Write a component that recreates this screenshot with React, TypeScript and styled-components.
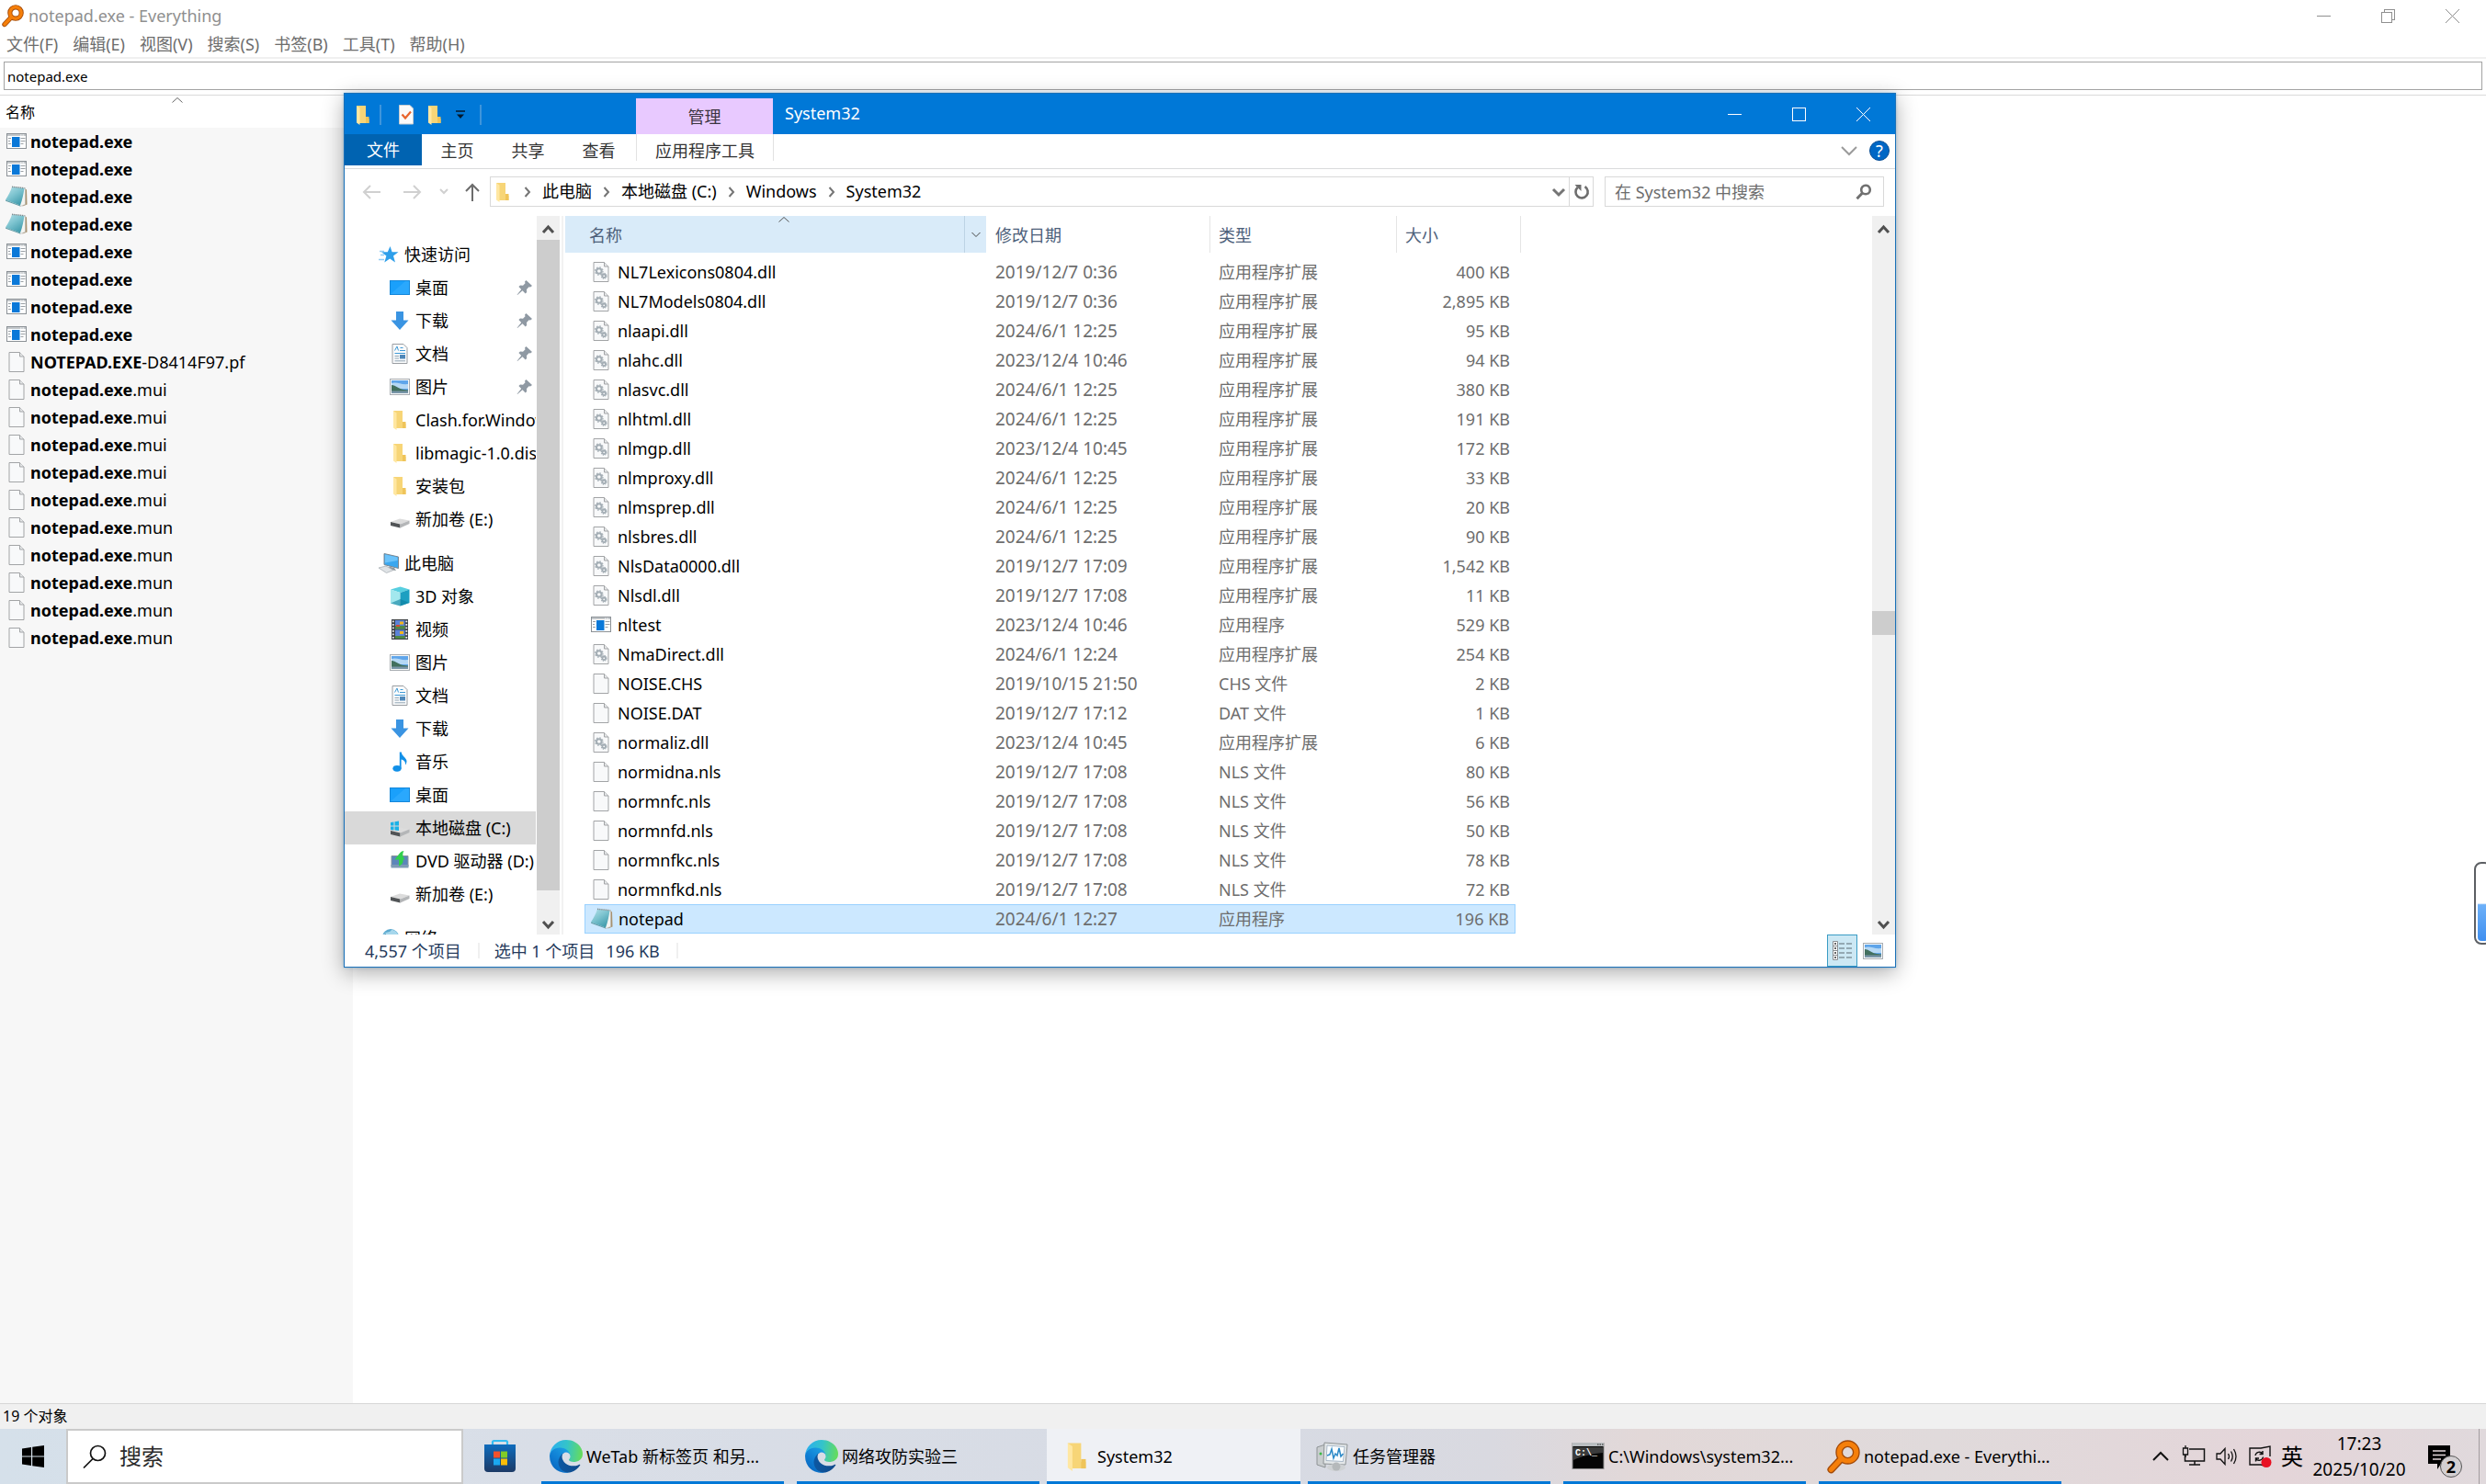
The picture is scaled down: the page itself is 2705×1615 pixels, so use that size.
import React from 'react';
import styled, { createGlobalStyle, css } from 'styled-components';

const UI_FONT = '"Noto Sans", "Noto Sans CJK SC", sans-serif';

const GlobalStyle = createGlobalStyle`
  *, *::before, *::after { box-sizing: border-box; }
  html, body { margin: 0; padding: 0; background: #fff; overflow: hidden; }
  body { font-family: ${UI_FONT}; font-size: 18px; line-height: 24px; color: #000; }
  button, input { font: inherit; color: inherit; margin: 0; padding: 0; border: 0; background: none; border-radius: 0; outline: 0; }
  button { cursor: default; }
  svg { display: block; flex: none; overflow: visible; }
  table { border-collapse: separate; border-spacing: 0; }
  ul { list-style: none; margin: 0; padding: 0; }
`;

/* ------------------------------------------------------------------ icons */

const MagnifierLogo = ({ size = 24 }: { size?: number }) => (
  <svg width={size} height={size} viewBox="0 0 24 24">
    <circle cx="15" cy="9" r="6.2" fill="none" stroke="#a34a08" strokeWidth="5.2" />
    <path d="M10.5 13.5 L3 21.5" stroke="#a34a08" strokeWidth="5.4" strokeLinecap="round" />
    <circle cx="15" cy="9" r="6.2" fill="none" stroke="#f57f0a" strokeWidth="3.4" />
    <path d="M10.5 13.5 L3 21.5" stroke="#f57f0a" strokeWidth="3.6" strokeLinecap="round" />
  </svg>
);

const ExeIcon = () => (
  <svg width="22" height="18" viewBox="0 0 22 18">
    <rect x=".5" y=".5" width="21" height="16" fill="#fff" stroke="#8b9196" />
    <path d="M1 2h20" stroke="#c3c7ca" strokeWidth="2" />
    <path d="M15 2h1.500M17.500 2h1.500" stroke="#fff" strokeWidth="1.200" />
    <path d="M2 5.500h3M2 8.500h2M2 11.500h3M15.500 5.500h5M15.500 8.500h5M15.500 11.500h3" stroke="#9aa0a5" />
    <rect x="6" y="4" width="8.500" height="11" fill="#0a78d8" />
  </svg>
);

const NotepadIcon = ({ size = 24 }: { size?: number }) => (
  <svg width={size} height={size} viewBox="0 0 24 24">
    <defs>
      <linearGradient id="padCover" x1="0" y1="0" x2=".7" y2="1">
        <stop offset="0" stopColor="#b7e2ea" />
        <stop offset=".5" stopColor="#7cc3cf" />
        <stop offset="1" stopColor="#3f9aab" />
      </linearGradient>
    </defs>
    <path d="M21 3 L23 4.500 L23.500 20.500 L18.500 22.500 Z" fill="#a89270" />
    <path d="M8 1.500 L21.500 2.500 L21.500 20.500 L16 22.500 Z" fill="#f4f4f1" stroke="#b4b5b3" strokeWidth=".6" />
    <path d="M7 1.500 L20.500 3 C19.500 9 18.500 15 16 21.500 L0 15.500 C3 11 5.500 6 7 1.500 Z" fill="url(#padCover)" />
    <path d="M0 15.500 L16 21.500 L16 22.600 L.2 16.800 Z" fill="#5f9aa5" />
    <path d="M7 1.300 L20.500 2.800" stroke="#7c8b90" strokeWidth="1.400" strokeDasharray="1.200 1" />
  </svg>
);

const PageIcon = ({ gears = false, size = 24 }: { gears?: boolean; size?: number }) => (
  <svg width={size} height={size} viewBox="0 0 24 24">
    <path d="M4 1.500 H15.500 L20 6 V22.500 H4 Z" fill="#f8f9fa" stroke="#a2a4a6" />
    <path d="M15.500 1.500 V6 H20" fill="#e6e8e9" stroke="#a2a4a6" />
    {gears && (
      <g fill="none" stroke="#a3adb4">
        <circle cx="9.800" cy="11" r="2.800" strokeWidth="2" />
        <circle cx="9.800" cy="11" r="4.200" strokeWidth="1.200" strokeDasharray="1.600 1.700" />
        <circle cx="15.200" cy="16.300" r="1.800" strokeWidth="1.800" />
        <circle cx="15.200" cy="16.300" r="2.900" strokeWidth="1.200" strokeDasharray="1.200 1.080" />
      </g>
    )}
  </svg>
);

const FolderIcon = ({ size = 22 }: { size?: number }) => (
  <svg width={size} height={size} viewBox="0 0 22 22">
    <path d="M4 1 H14 V15 H17.500 V20 H7 Z" fill="#f7d577" />
    <path d="M14 13 H17.500 V20 H14 Z" fill="#efc45a" />
    <path d="M4 1 L7.500 3.500 V22 L4 19.500 Z" fill="#ffe7a2" />
  </svg>
);

const StarIcon = () => (
  <svg width="22" height="22" viewBox="0 0 22 22">
    <path d="M12.500 2 L14.600 8.200 L21.500 8.200 L16 12.400 L18 19.500 L12.200 15.400 L6.300 19.500 L8.400 12.400 L3 8.200 L9.800 8.200 Z" fill="#2e9fea" />
    <path d="M1 7.500 h5 M2 11.500 h4 M0 16.500 h6" stroke="#8fccf5" strokeWidth="1.300" />
  </svg>
);

const DesktopIcon = () => (
  <svg width="22" height="22" viewBox="0 0 22 22">
    <rect x=".5" y="3.500" width="21" height="15" fill="#1aa0fb" stroke="#1386da" />
    <path d="M1 18 L17 4 H21 V18 Z" fill="#35adff" opacity=".6" />
  </svg>
);

const DownloadIcon = () => (
  <svg width="22" height="22" viewBox="0 0 22 22">
    <path d="M7 1 H15 V10.500 H20.500 L11 21 L1.500 10.500 H7 Z" fill="#3a94e2" />
  </svg>
);

const DocumentIcon = () => (
  <svg width="22" height="22" viewBox="0 0 22 22">
    <path d="M3 .5 H15 L19 4.500 V21.500 H3 Z" fill="#fafbfc" stroke="#9a9ea2" />
    <path d="M5.500 7.500 L8 3 L9.500 7.500 M11.500 4.500 h3 M11 7.500 h6 M5.500 10.500 h11.500" stroke="#3f9ad6" fill="none" />
    <rect x="11" y="12" width="6" height="4.500" fill="#4f87b8" />
    <path d="M5.500 13.500 h4.500 M5.500 16 h4.500 M5.500 18.800 h11.500" stroke="#8fa3b2" />
  </svg>
);

const PictureIcon = ({ size = 22 }: { size?: number }) => (
  <svg width={size} height={size} viewBox="0 0 22 22">
    <rect x=".5" y="2.500" width="21" height="17" fill="#f7f8f8" stroke="#a8adb2" />
    <rect x="2" y="4" width="18" height="14" fill="#5fa5ea" />
    <path d="M2 7 C8 5 12 9 20 8 V13 H2 Z" fill="#b5d8f5" />
    <path d="M2 9 C7 9.500 9 13 15 14 L20 14.500 V18 H2 Z" fill="#42705f" />
    <path d="M2 15.500 H20 V18 H2 Z" fill="#7895a8" />
  </svg>
);

const DriveIcon = ({ system = false }: { system?: boolean }) => (
  <svg width="22" height="22" viewBox="0 0 22 22">
    <path d="M1 14 L11 10.500 L21.500 12.500 L11.500 16.500 Z" fill="#dcdcdc" />
    <path d="M1 14 L11.500 16.500 V20.500 L1 18 Z" fill="#515456" />
    <path d="M11.500 16.500 L21.500 12.500 V16 L11.500 20.500 Z" fill="#b4b6b8" />
    {system && (
      <path d="M1 5 L4.500 4.500 V8.500 H1 Z M5.500 4.300 L10 3.600 V8.500 H5.500 Z M1 9.500 H4.500 V13.400 L1 13 Z M5.500 9.500 H10 V14 L5.500 13.500 Z" fill="#1bb1e7" />
    )}
  </svg>
);

const ComputerIcon = () => (
  <svg width="24" height="22" viewBox="0 0 24 22">
    <path d="M7 .5 L22.500 4 V16.500 L7 12.500 Z" fill="#3aa7ef" stroke="#7a8791" />
    <path d="M8 1.500 L21.500 4.600 V8 L8 10.500 Z" fill="#6cc3fa" />
    <path d="M12 14.500 L18 16 L20 19 L13 18 Z" fill="#8e979d" />
    <path d="M1 16 L9 14 L17 18.500 L9.500 21.500 Z" fill="#dfe3e6" stroke="#a9b0b5" strokeWidth=".8" />
  </svg>
);

const CubeIcon = () => (
  <svg width="22" height="22" viewBox="0 0 22 22">
    <path d="M1 3.500 L11.500 .5 L21.500 3.500 L11.500 7 Z" fill="#58cfe0" />
    <path d="M1 3.500 L11.500 7 V21.500 L1 18.500 Z" fill="#a3e8ee" />
    <path d="M21.500 3.500 L11.500 7 V21.500 L21.500 18 Z" fill="#1d9fc1" />
    <path d="M1 18.500 L11.500 14 L21.500 18 L11.500 21.500 Z" fill="#0e7f9f" opacity=".6" />
  </svg>
);

const VideoIcon = () => (
  <svg width="22" height="22" viewBox="0 0 22 22">
    <rect x="2" y="0" width="18" height="22" fill="#3c4146" />
    <rect x="6" y="1" width="10.500" height="9.500" fill="#5b83d8" />
    <rect x="6" y="11.500" width="10.500" height="9.500" fill="#5b83d8" />
    <path d="M11 2.500 h4 v3 h-4z M11 13 h4 v3 h-4z" fill="#f1b51d" />
    <path d="M6 7 h10.500 v3.500 H6z M6 18 h10.500 v3 H6z" fill="#4f8a45" />
    <path d="M7 6 h4 v2 h-4z" fill="#d34b32" />
    <path d="M3.800 1.500 V22 M18.300 1.500 V22" stroke="#f0f2f3" strokeWidth="1.800" strokeDasharray="1.800 1.700" />
  </svg>
);

const MusicIcon = () => (
  <svg width="22" height="22" viewBox="0 0 22 22">
    <ellipse cx="8" cy="18.300" rx="4.600" ry="3.400" fill="#1190e8" />
    <path d="M10.800 18.500 V.5 H12.800 C13 5 18.500 6.500 18.500 10.500 C18.500 12 17.800 13.500 17 14.500 C17.500 11 15.500 9 12.600 8.500 V18.500 Z" fill="#1190e8" />
  </svg>
);

const DvdIcon = () => (
  <svg width="22" height="22" viewBox="0 0 22 22">
    <path d="M2 5.500 H20 V17 H2 Z" fill="#5c86ba" stroke="#8a949c" />
    <path d="M1.500 15 H20.500 V18.500 H1.500 Z" fill="#7d9ab5" />
    <path d="M10 16.500 V9.500 H5.500 L10.500 3 C12 1 13.500 .3 15.500 0 C14 2.500 14 5 15 7 L16.500 9.500 H14.500 C15 13 13 15.500 10 16.500 Z" fill="#31d04c" />
  </svg>
);

const NetworkIcon = () => (
  <svg width="24" height="22" viewBox="0 0 24 22">
    <circle cx="14" cy="10" r="9" fill="#5ba9cf" />
    <path d="M6 7 C10 3 12 6 15 2 C20 2 23 7 22.500 10 H12 Z" fill="#a6d7ec" />
    <path d="M1 9 L9 6 V14 H1 Z" fill="#3d87b3" />
  </svg>
);

const PinIcon = () => (
  <svg width="18" height="18" viewBox="0 0 18 18">
    <path d="M10.500 1 L17 7 L15 8.500 L13.500 8.200 L11 11 L11.200 14 L9.700 15.500 L6.500 12.300 L1 17 L.6 16.700 L5.200 11 L2.400 8 L4 6.500 L7 6.700 L9.500 4.200 L9 2.500 Z" fill="#8f99a3" />
  </svg>
);

const Stroke = ({ d, w, h, color, width = 1, sharp = true }: { d: string; w: number; h: number; color: string; width?: number; sharp?: boolean }) => (
  <svg width={w} height={h} viewBox={`0 0 ${w} ${h}`}>
    <path d={d} fill="none" stroke={color} strokeWidth={width} shapeRendering={sharp ? 'crispEdges' : 'auto'} />
  </svg>
);

const SearchGlyph = () => (
  <svg width="18" height="18" viewBox="0 0 18 18">
    <circle cx="11" cy="6.500" r="4.800" fill="none" stroke="#707070" strokeWidth="2.600" />
    <path d="M7.500 10 L1.500 16.300" stroke="#707070" strokeWidth="3" />
  </svg>
);

const RefreshGlyph = () => (
  <svg width="18" height="18" viewBox="0 0 18 18">
    <path d="M12.500 3.200 A6.600 6.600 0 1 1 4.600 4" fill="none" stroke="#6e6e6e" strokeWidth="2.600" />
    <path d="M1.500 1 H8.500 V8 Z" fill="#6e6e6e" />
  </svg>
);

const StoreIcon = () => (
  <svg width="36" height="36" viewBox="0 0 36 36">
    <defs>
      <linearGradient id="storeBag" x1="0" y1="0" x2="0" y2="1">
        <stop offset="0" stopColor="#0f6cbd" />
        <stop offset="1" stopColor="#1c3a66" />
      </linearGradient>
    </defs>
    <path d="M10 6 V2.500 Q10 1 11.500 1 H24.500 Q26 1 26 2.500 V6" fill="none" stroke="#35bdf2" strokeWidth="2.200" />
    <path d="M1 5 H35 V31 Q35 35 31 35 H5 Q1 35 1 31 Z" fill="url(#storeBag)" />
    <rect x="11" y="12.500" width="7" height="7" fill="#f1512b" />
    <rect x="19" y="12.500" width="7" height="7" fill="#80cc28" />
    <rect x="11" y="20.500" width="7" height="7" fill="#1ba8f0" />
    <rect x="19" y="20.500" width="7" height="7" fill="#fbbd09" />
  </svg>
);

const EdgeIcon = () => (
  <svg width="36" height="36" viewBox="0 0 256 256">
    <defs>
      <linearGradient id="edgeA" x1="58" y1="177" x2="231" y2="177" gradientUnits="userSpaceOnUse">
        <stop offset="0" stopColor="#0c59a4" />
        <stop offset="1" stopColor="#114a8b" />
      </linearGradient>
      <linearGradient id="edgeB" x1="150" y1="90" x2="40" y2="220" gradientUnits="userSpaceOnUse">
        <stop offset="0" stopColor="#1b9de2" />
        <stop offset=".6" stopColor="#0f7fd4" />
        <stop offset="1" stopColor="#0a6cc4" />
      </linearGradient>
      <linearGradient id="edgeC" x1="10" y1="80" x2="250" y2="110" gradientUnits="userSpaceOnUse">
        <stop offset="0" stopColor="#2cb0ec" />
        <stop offset=".5" stopColor="#34c4c9" />
        <stop offset="1" stopColor="#66dc5c" />
      </linearGradient>
    </defs>
    <path d="M231 190.500a93.700 93.700 0 0 1-10.500 4.700 101.900 101.900 0 0 1-35.900 6.400c-47.300 0-88.500-32.500-88.500-74.300A31.500 31.500 0 0 1 112.500 100c-42.800 1.800-53.800 46.400-53.800 72.500 0 74 68.100 81.400 82.800 81.400 7.900 0 19.800-2.300 27-4.600l1.300-.4a128.300 128.300 0 0 0 66.600-52.800 4 4 0 0 0-5.400-5.600Z" fill="url(#edgeA)" />
    <path d="M105.700 241.400A79.200 79.200 0 0 1 83 220.100a80.700 80.700 0 0 1 29.500-120c3.100-1.500 8.500-4.200 15.600-4a32.400 32.400 0 0 1 25.700 13 31.900 31.900 0 0 1 6.300 18.700c0-.2 24.500-79.600-80-79.600-43.900 0-80 41.700-80 78.200a130.200 130.200 0 0 0 12.100 56 128 128 0 0 0 156.400 67 75.500 75.500 0 0 1-62.800-8Z" fill="url(#edgeB)" />
    <path d="M152.300 148.900c-.8 1-3.300 2.500-3.300 5.700 0 2.600 1.700 5.100 4.700 7.200 14.400 10 41.500 8.700 41.600 8.700a59.600 59.600 0 0 0 30.300-8.300 61.400 61.400 0 0 0 30.400-52.900c.3-22.400-8-37.300-11.300-43.900C223.500 23.900 177.700 0 128 0A128 128 0 0 0 0 126.200c.5-36.500 36.800-66 80-66 3.500 0 23.500.3 42 10a72.600 72.600 0 0 1 30.900 29.300c6.100 10.600 7.200 24.100 7.200 29.500 0 5.400-2.700 13.300-7.800 19.900Z" fill="url(#edgeC)" />
  </svg>
);

const TaskManagerIcon = () => (
  <svg width="36" height="36" viewBox="0 0 36 36">
    <path d="M1 8 L10 5 V30 L1 27 Z" fill="#c9cdcf" stroke="#8e9395" />
    <circle cx="5" cy="15" r="1.500" fill="#3cba45" />
    <path d="M9 3 L34 5 L32 27 L8 26 Z" fill="#e3e7e9" stroke="#8e9395" />
    <path d="M12 6 L31 7.500 L29.500 23.500 L11 22.500 Z" fill="#f8fcff" stroke="#9ab" strokeWidth=".8" />
    <path d="M12 17 L15 16 L17 10 L19 20 L21 15 L23 17 L25 9 L27 18 L29.500 15" fill="none" stroke="#2d8ac7" strokeWidth="1.500" />
    <ellipse cx="22" cy="30" rx="10" ry="4" fill="#cfd2d4" />
    <circle cx="22" cy="29" r="4.500" fill="#b5b9bb" />
  </svg>
);

const ConsoleText = styled.text`
  font: bold 10px "Liberation Mono", monospace;
  fill: #fff;
`;

const ConsoleIcon = () => (
  <svg width="36" height="36" viewBox="0 0 36 36">
    <rect x="1" y="3.500" width="34" height="28" fill="#050505" stroke="#8f8f8f" />
    <rect x="1" y="3" width="34" height="4" fill="#b9bdc0" />
    <path d="M28 5h1.500M30.500 5h1.500M33 5h1.500" stroke="#555" strokeWidth="1.500" />
    <path d="M2 8 H34 V14 C22 15 10 18 2 22 Z" fill="#3b3b3b" />
    <ConsoleText x="4" y="17">C:\_</ConsoleText>
  </svg>
);

const WindowsLogo = () => (
  <svg width="24" height="24" viewBox="0 0 24 24">
    <path d="M0 3.500 L10 2 V11.400 H0 Z M11.200 1.800 L24 0 V11.400 H11.200 Z M0 12.600 H10 V22 L0 20.500 Z M11.200 12.600 H24 V24 L11.200 22.200 Z" />
  </svg>
);

const MonitorTray = () => (
  <svg width="26" height="24" viewBox="0 0 26 24">
    <path d="M8 4 H24.500 V17 H3.500 V10 M14 17 V20.500 M8 21 H20" fill="none" stroke="#111" strokeWidth="1.500" />
    <path d="M1.500 3 H6.500 V10 H1.500 Z M4 3 V0 M4 10 V13" fill="none" stroke="#111" strokeWidth="1.300" />
  </svg>
);

const SpeakerTray = () => (
  <svg width="24" height="22" viewBox="0 0 24 22">
    <path d="M1 8 H5 L10 2.500 V19.500 L5 14 H1 Z" fill="none" stroke="#111" strokeWidth="1.300" />
    <path d="M13.500 8 Q15.500 11 13.500 14 M16.500 5.500 Q20 11 16.500 16.500 M19.500 3 Q24.500 11 19.500 19" fill="none" stroke="#111" strokeWidth="1.300" />
  </svg>
);

const UpdateTray = () => (
  <svg width="26" height="26" viewBox="0 0 26 26">
    <path d="M24 13 V2 L14 4 H2 V22 H14 M14 22 L18 23" fill="none" stroke="#111" strokeWidth="1.400" />
    <path d="M8 12 A4.500 4.500 0 0 1 16 10 M16 7 V10.500 H12.500 M16.500 13.500 A4.500 4.500 0 0 1 8.500 15.500 M8.500 18.500 V15 H12" fill="none" stroke="#111" strokeWidth="1.400" />
    <circle cx="20" cy="19.500" r="5.500" fill="#e81123" />
  </svg>
);

/* ------------------------------------------------------- background window */

const Desktop = styled.div`
  position: relative;
  display: flex;
  flex-direction: column;
  height: 100vh;
  background: #fff;
`;

const SearchWindow = styled.main`
  flex: 1;
  min-height: 0;
  display: flex;
  flex-direction: column;
`;

const TitleRow = styled.header`
  display: flex;
  align-items: center;
  height: 34px;
  padding: 0 2px;
  color: #8f8f8f;
`;

const TitleText = styled.span`
  margin-left: 5px;
`;

const Grow = styled.div`
  flex: 1;
`;

const CaptionButton = styled.button`
  display: flex;
  align-items: center;
  justify-content: center;
  width: 70px;
  height: 100%;
`;

const MenuBar = styled.nav`
  display: flex;
  height: 30px;
  padding-top: 2px;
  border-bottom: 2px solid #f0f0f0;
`;

const MenuButton = styled.button`
  height: 24px;
  padding: 0 8px;
  color: #6d6d6d;
  white-space: nowrap;
  &:first-child { padding-left: 7px; }
`;

const QueryBox = styled.input`
  height: 31px;
  margin: 3px 4px 5px;
  padding: 0 3px;
  border: 1px solid #a3a3a3;
  font-size: 15px;
`;

const ResultHeader = styled.button`
  position: relative;
  height: 36px;
  width: 100%;
  border-top: 1px solid #dadada;
  padding: 0 6px;
  text-align: left;
  font-size: 16px;
`;

const SortMark = styled.span<{ $left: number; $top: number }>`
  position: absolute;
  left: ${(p) => p.$left}px;
  top: ${(p) => p.$top}px;
`;

const ResultArea = styled.section`
  flex: 1;
  min-height: 0;
  display: flex;
`;

const ResultColumn = styled.ul`
  width: 384px;
  background: #f7f7f7;
`;

const ResultRow = styled.li`
  display: flex;
  align-items: center;
  height: 30px;
  padding-left: 6px;
  gap: 3px;
  white-space: nowrap;
`;

const IconSlot = styled.span<{ $w: number }>`
  display: flex;
  align-items: center;
  justify-content: center;
  flex: none;
  width: ${(p) => p.$w}px;
`;

const StatusStrip = styled.footer`
  height: 28px;
  padding: 1px 3px;
  border-top: 1px solid #d7d7d7;
  background: #f0f0f0;
  font-size: 16px;
`;

type Hit = { icon: 'exe' | 'pad' | 'page'; match: string; rest?: string };

const exeHit: Hit = { icon: 'exe', match: 'notepad.exe' };
const padHit: Hit = { icon: 'pad', match: 'notepad.exe' };
const hits: Hit[] = [
  exeHit, exeHit, padHit, padHit, exeHit, exeHit, exeHit, exeHit,
  { icon: 'page', match: 'NOTEPAD.EXE', rest: '-D8414F97.pf' },
  ...Array.from({ length: 5 }, (): Hit => ({ icon: 'page', match: 'notepad.exe', rest: '.mui' })),
  ...Array.from({ length: 5 }, (): Hit => ({ icon: 'page', match: 'notepad.exe', rest: '.mun' })),
];

const hitIcon = { exe: <ExeIcon />, pad: <NotepadIcon />, page: <PageIcon /> };

const Everything = () => (
  <SearchWindow>
    <TitleRow>
      <MagnifierLogo />
      <TitleText>notepad.exe - Everything</TitleText>
      <Grow />
      <CaptionButton aria-label="最小化"><Stroke w={15} h={15} d="M0 7.500H15" color="#8f8f8f" /></CaptionButton>
      <CaptionButton aria-label="还原"><Stroke w={15} h={15} d="M.5 3.500H11.500V14.500H.5ZM3.500 3V.5H14.500V11.500H12" color="#8f8f8f" /></CaptionButton>
      <CaptionButton aria-label="关闭"><Stroke w={15} h={15} d="M0 0L15 15M15 0L0 15" color="#8f8f8f" sharp={false} /></CaptionButton>
    </TitleRow>
    <MenuBar>
      {['文件(F)', '编辑(E)', '视图(V)', '搜索(S)', '书签(B)', '工具(T)', '帮助(H)'].map((m) => (
        <MenuButton key={m}>{m}</MenuButton>
      ))}
    </MenuBar>
    <QueryBox aria-label="搜索" defaultValue="notepad.exe" spellCheck={false} />
    <ResultHeader>
      名称
      <SortMark $left={187} $top={2}><Stroke w={12} h={6} d="M.5 5.500L6 .5L11.500 5.500" color="#666" sharp={false} /></SortMark>
    </ResultHeader>
    <ResultArea>
      <ResultColumn>
        {hits.map((h, i) => (
          <ResultRow key={i}>
            <IconSlot $w={24}>{hitIcon[h.icon]}</IconSlot>
            <span><b>{h.match}</b>{h.rest}</span>
          </ResultRow>
        ))}
      </ResultColumn>
    </ResultArea>
    <StatusStrip>19 个对象</StatusStrip>
  </SearchWindow>
);

/* --------------------------------------------------------- explorer window */

const ExplorerFrame = styled.section`
  position: absolute;
  left: 374px;
  top: 101px;
  width: 1689px;
  height: 952px;
  display: flex;
  flex-direction: column;
  background: #fff;
  border: 1px solid #1a70b8;
  box-shadow: 0 6px 22px rgba(0, 0, 0, 0.32), 0 0 3px rgba(80, 170, 230, 0.5);
`;

const TitleBar = styled.header`
  display: flex;
  height: 44px;
  background: #0078d7;
  color: #fff;
`;

const QuickTools = styled.div`
  display: flex;
  align-items: center;
  width: 317px;
  padding: 2px 0 0 9px;
`;

const ToolButton = styled.button<{ $w: number }>`
  display: flex;
  align-items: center;
  justify-content: center;
  width: ${(p) => p.$w}px;
  height: 24px;
`;

const ToolDivider = styled.span`
  width: 2px;
  height: 22px;
  background: #3f95db;
`;

const ContextTab = styled.div`
  align-self: flex-end;
  width: 149px;
  height: 39px;
  padding-top: 8px;
  background: #e8c9ff;
  color: #3b3440;
  text-align: center;
`;

const WindowTitle = styled.h1`
  margin: 0;
  padding: 9px 13px;
  font-size: 18px;
  font-weight: 400;
`;

const RibbonTabs = styled.nav`
  display: flex;
  height: 38px;
  border-bottom: 1px solid #dadbdc;
`;

const RibbonTab = styled.button<{ $primary?: boolean }>`
  width: 77px;
  height: 34px;
  padding-top: 2px;
  color: #333;
  ${(p) => p.$primary && css`
    width: 84px;
    padding-top: 0;
    background: #0063b1;
    color: #fff;
  `}
`;

const AppToolsTab = styled.button`
  width: 150px;
  height: 29px;
  margin-left: 2px;
  padding-top: 6px;
  border: solid #e2e2e2;
  border-width: 0 1px;
  color: #333;
`;

const HelpButton = styled.button`
  width: 22px;
  height: 22px;
  margin: 7px 6px 0 13px;
  border-radius: 50%;
  border: 1px solid #0b4f94;
  background: #0067c5;
  color: #fff;
  line-height: 20px;
`;

const RibbonToggle = styled.button`
  width: 18px;
  height: 36px;
`;

const AddressRow = styled.div`
  display: flex;
  align-items: center;
  height: 51px;
  padding: 0 12px 2px;
`;

const NavButton = styled.button<{ $w: number }>`
  display: flex;
  align-items: center;
  justify-content: center;
  width: ${(p) => p.$w}px;
  height: 33px;
`;

const AddressBox = styled.div`
  display: flex;
  align-items: center;
  flex: 1;
  height: 33px;
  padding-left: 2px;
  border: 1px solid #d9d9d9;
`;

const Crumb = styled.button`
  padding: 0 12px 2px;
  white-space: nowrap;
`;

const RefreshButton = styled(NavButton)`
  border-left: 1px solid #d9d9d9;
  height: 31px;
`;

const FolderSearch = styled.label`
  display: flex;
  align-items: center;
  width: 304px;
  height: 33px;
  margin-left: 12px;
  padding: 0 12px 0 10px;
  border: 1px solid #d9d9d9;
`;

const FolderSearchInput = styled.input`
  flex: 1;
  min-width: 0;
  &::placeholder { color: #6d6d6d; opacity: 1; }
`;

const Panes = styled.div`
  display: flex;
  flex: 1;
  min-height: 0;
`;

const NavPane = styled.nav`
  width: 209px;
  padding-top: 24px;
  overflow: hidden;
`;

const NavItem = styled.a<{ $level: number; $active?: boolean; $gap?: boolean }>`
  display: flex;
  align-items: center;
  height: 36px;
  margin-top: ${(p) => (p.$gap ? 12 : 0)}px;
  padding-left: ${(p) => (p.$level ? 49 : 37)}px;
  margin-right: 1px;
  gap: 6px;
  color: #000;
  text-decoration: none;
  white-space: nowrap;
  overflow: hidden;
  background: ${(p) => (p.$active ? '#d9d9d9' : 'transparent')};
`;

const PinSlot = styled.span`
  margin-left: auto;
  padding-right: 3px;
`;

const ScrollColumn = styled.div`
  display: flex;
  flex-direction: column;
  flex: none;
  width: 25px;
  background: #f0f0f0;
`;

const ScrollButton = styled.button`
  display: flex;
  align-items: center;
  justify-content: center;
  height: 26px;
  flex: none;
  padding-top: 3px;
`;

const ScrollTrack = styled.div`
  flex: 1;
  display: flex;
  flex-direction: column;
`;

const ScrollSpace = styled.div<{ $grow: number }>`
  flex: ${(p) => p.$grow} 0 0;
`;

const ScrollThumb = styled.div<{ $grow: number }>`
  flex: ${(p) => p.$grow} 0 0;
  min-height: 26px;
  background: #cdcdcd;
`;

const PaneSplit = styled.div`
  width: 6px;
  border-right: 2px solid #fff;
  box-shadow: inset -2px 0 0 #f2f2f2;
`;

const FilePane = styled.div`
  flex: 1;
  min-width: 0;
  overflow: hidden;
`;

const FileTable = styled.table`
  table-layout: fixed;
  width: 1040px;
`;

const HeadCell = styled.th`
  height: 45px;
  padding: 0;
  font-weight: 400;
  text-align: left;
  vertical-align: top;
`;

const HeadLabel = styled.div<{ $pad: number; $sorted?: boolean }>`
  position: relative;
  display: flex;
  align-items: center;
  justify-content: space-between;
  height: 40px;
  padding: 2px 0 0 ${(p) => p.$pad}px;
  color: #4c607a;
  background: ${(p) => (p.$sorted ? '#d9ebf9' : '#fff')};
  border-right: ${(p) => (p.$sorted ? '0' : '1px solid #e5e5e5')};
`;

const FilterButton = styled.button`
  display: flex;
  align-items: center;
  justify-content: center;
  width: 24px;
  height: 40px;
  margin-top: -2px;
  border-left: 1px solid #bdd3e4;
`;

const FileRow = styled.tr<{ $selected?: boolean }>`
  td {
    height: 32px;
    padding: 0;
    color: #6d6d6d;
    white-space: nowrap;
  }
  ${(p) => p.$selected && css`
    td:not(:first-child):not(:last-child) {
      background: #cce8ff;
      border: solid #99d1ff;
      border-width: 1px 0;
    }
    td:nth-child(2) { border-left-width: 1px !important; }
    td:nth-child(5) { border-right-width: 1px !important; }
  `}
`;

const NameCell = styled.div`
  display: flex;
  align-items: center;
  padding-left: 6px;
  gap: 6px;
  color: #000;
`;

const TextCell = styled.td<{ $pad: number; $size?: number }>`
  && {
    padding-left: ${(p) => p.$pad}px;
    font-size: ${(p) => p.$size ?? 18}px;
  }
`;

const SizeCell = styled.td`
  && { padding-right: 6px; text-align: right; }
`;

const ExplorerStatus = styled.footer`
  display: flex;
  align-items: center;
  height: 35px;
  padding-left: 22px;
  color: #253a5c;
`;

const StatusDivider = styled.span`
  width: 2px;
  height: 17px;
  margin: 0 16px 0 18px;
  background: #f0f0f0;
`;

const StatusSize = styled.span`
  margin-left: 12px;
`;

const ViewButton = styled.button<{ $on?: boolean }>`
  display: flex;
  align-items: center;
  justify-content: center;
  width: 33px;
  height: 35px;
  border: 1px solid ${(p) => (p.$on ? '#3a9cc4' : 'transparent')};
  background: ${(p) => (p.$on ? '#cce8f4' : 'transparent')};
`;

type NavEntry = { label: string; icon: React.ReactNode; level: number; pin?: boolean; active?: boolean; gap?: boolean };

const navEntries: NavEntry[] = [
  { label: '快速访问', icon: <StarIcon />, level: 0 },
  { label: '桌面', icon: <DesktopIcon />, level: 1, pin: true },
  { label: '下载', icon: <DownloadIcon />, level: 1, pin: true },
  { label: '文档', icon: <DocumentIcon />, level: 1, pin: true },
  { label: '图片', icon: <PictureIcon />, level: 1, pin: true },
  { label: 'Clash.for.Windows', icon: <FolderIcon />, level: 1 },
  { label: 'libmagic-1.0.dist', icon: <FolderIcon />, level: 1 },
  { label: '安装包', icon: <FolderIcon />, level: 1 },
  { label: '新加卷 (E:)', icon: <DriveIcon />, level: 1 },
  { label: '此电脑', icon: <ComputerIcon />, level: 0, gap: true },
  { label: '3D 对象', icon: <CubeIcon />, level: 1 },
  { label: '视频', icon: <VideoIcon />, level: 1 },
  { label: '图片', icon: <PictureIcon />, level: 1 },
  { label: '文档', icon: <DocumentIcon />, level: 1 },
  { label: '下载', icon: <DownloadIcon />, level: 1 },
  { label: '音乐', icon: <MusicIcon />, level: 1 },
  { label: '桌面', icon: <DesktopIcon />, level: 1 },
  { label: '本地磁盘 (C:)', icon: <DriveIcon system />, level: 1, active: true },
  { label: 'DVD 驱动器 (D:)', icon: <DvdIcon />, level: 1 },
  { label: '新加卷 (E:)', icon: <DriveIcon />, level: 1 },
  { label: '网络', icon: <NetworkIcon />, level: 0, gap: true },
];

const DLL = '应用程序扩展';
const APP = '应用程序';
const NLS = 'NLS 文件';

const files: [string, string, string, string][] = [
  ['NL7Lexicons0804.dll', '2019/12/7 0:36', DLL, '400 KB'],
  ['NL7Models0804.dll', '2019/12/7 0:36', DLL, '2,895 KB'],
  ['nlaapi.dll', '2024/6/1 12:25', DLL, '95 KB'],
  ['nlahc.dll', '2023/12/4 10:46', DLL, '94 KB'],
  ['nlasvc.dll', '2024/6/1 12:25', DLL, '380 KB'],
  ['nlhtml.dll', '2024/6/1 12:25', DLL, '191 KB'],
  ['nlmgp.dll', '2023/12/4 10:45', DLL, '172 KB'],
  ['nlmproxy.dll', '2024/6/1 12:25', DLL, '33 KB'],
  ['nlmsprep.dll', '2024/6/1 12:25', DLL, '20 KB'],
  ['nlsbres.dll', '2024/6/1 12:25', DLL, '90 KB'],
  ['NlsData0000.dll', '2019/12/7 17:09', DLL, '1,542 KB'],
  ['Nlsdl.dll', '2019/12/7 17:08', DLL, '11 KB'],
  ['nltest', '2023/12/4 10:46', APP, '529 KB'],
  ['NmaDirect.dll', '2024/6/1 12:24', DLL, '254 KB'],
  ['NOISE.CHS', '2019/10/15 21:50', 'CHS 文件', '2 KB'],
  ['NOISE.DAT', '2019/12/7 17:12', 'DAT 文件', '1 KB'],
  ['normaliz.dll', '2023/12/4 10:45', DLL, '6 KB'],
  ['normidna.nls', '2019/12/7 17:08', NLS, '80 KB'],
  ['normnfc.nls', '2019/12/7 17:08', NLS, '56 KB'],
  ['normnfd.nls', '2019/12/7 17:08', NLS, '50 KB'],
  ['normnfkc.nls', '2019/12/7 17:08', NLS, '78 KB'],
  ['normnfkd.nls', '2019/12/7 17:08', NLS, '72 KB'],
  ['notepad', '2024/6/1 12:27', APP, '196 KB'],
];

const fileIcon = (name: string, type: string) => {
  if (name === 'notepad') return <NotepadIcon />;
  if (type === APP) return <ExeIcon />;
  return <PageIcon gears={type === DLL} />;
};

const Scrollbar = ({ before, thumb, after }: { before: number; thumb: number; after: number }) => (
  <ScrollColumn>
    <ScrollButton aria-label="向上滚动"><Stroke w={13} h={10} d="M1 8L6.500 2L12 8" color="#505050" width={3} sharp={false} /></ScrollButton>
    <ScrollTrack>
      <ScrollSpace $grow={before} />
      <ScrollThumb $grow={thumb} />
      <ScrollSpace $grow={after} />
    </ScrollTrack>
    <ScrollButton aria-label="向下滚动"><Stroke w={13} h={10} d="M1 2L6.500 8L12 2" color="#505050" width={3} sharp={false} /></ScrollButton>
  </ScrollColumn>
);

const CrumbArrow = () => <Stroke w={8} h={12} d="M1.500 1L6 6L1.500 11" color="#757575" width={2} sharp={false} />;

const Explorer = () => (
  <ExplorerFrame>
    <TitleBar>
      <QuickTools>
        <FolderIcon />
        <IconSlot $w={16}><ToolDivider /></IconSlot>
        <ToolButton $w={40} aria-label="属性">
          <svg width="16" height="22" viewBox="0 0 16 22">
            <path d="M.5 .5H12L15.500 4V21H.5Z" fill="#fafafa" stroke="#c8ccd0" />
            <path d="M3.500 10.500L7 14.500L13 7.500" fill="none" stroke="#e8642c" strokeWidth="2.200" />
          </svg>
        </ToolButton>
        <ToolButton $w={22} aria-label="新建文件夹"><FolderIcon /></ToolButton>
        <ToolButton $w={34} aria-label="自定义快速访问工具栏">
          <svg width="10" height="10" viewBox="0 0 10 10"><path d="M0 1H10" stroke="#04192d" strokeWidth="1.500" /><path d="M1 4.500H9L5 9Z" fill="#04192d" /></svg>
        </ToolButton>
        <IconSlot $w={10}><ToolDivider /></IconSlot>
      </QuickTools>
      <ContextTab>管理</ContextTab>
      <WindowTitle>System32</WindowTitle>
      <Grow />
      <CaptionButton aria-label="最小化"><Stroke w={15} h={15} d="M0 7.500H15" color="#fff" /></CaptionButton>
      <CaptionButton aria-label="最大化"><Stroke w={15} h={15} d="M.5 .5H14.500V14.500H.5Z" color="#fff" /></CaptionButton>
      <CaptionButton aria-label="关闭"><Stroke w={15} h={15} d="M0 0L15 15M15 0L0 15" color="#fff" sharp={false} /></CaptionButton>
    </TitleBar>

    <RibbonTabs>
      <RibbonTab $primary>文件</RibbonTab>
      <RibbonTab>主页</RibbonTab>
      <RibbonTab>共享</RibbonTab>
      <RibbonTab>查看</RibbonTab>
      <AppToolsTab>应用程序工具</AppToolsTab>
      <Grow />
      <RibbonToggle aria-label="展开功能区"><Stroke w={18} h={10} d="M1 1L9 9L17 1" color="#9b9b9b" width={2} sharp={false} /></RibbonToggle>
      <HelpButton aria-label="帮助">?</HelpButton>
    </RibbonTabs>

    <AddressRow>
      <NavButton $w={33} aria-label="后退"><Stroke w={20} h={16} d="M9 1L2 8L9 15M2 8H20" color="#d0d0d0" width={2} sharp={false} /></NavButton>
      <NavButton $w={58} aria-label="前进"><Stroke w={20} h={16} d="M11 1L18 8L11 15M18 8H0" color="#d0d0d0" width={2} sharp={false} /></NavButton>
      <NavButton $w={10} aria-label="最近浏览的位置"><Stroke w={10} h={7} d="M1 1L5 5L9 1" color="#d0d0d0" width={2} sharp={false} /></NavButton>
      <IconSlot $w={6} />
      <NavButton $w={39} aria-label="上移"><Stroke w={18} h={20} d="M2 9L9 2L16 9M9 2V20" color="#6c6c6c" width={2} sharp={false} /></NavButton>
      <AddressBox>
        <FolderIcon />
        <IconSlot $w={12} />
        <CrumbArrow />
        <Crumb>此电脑</Crumb><CrumbArrow />
        <Crumb>本地磁盘 (C:)</Crumb><CrumbArrow />
        <Crumb>Windows</Crumb><CrumbArrow />
        <Crumb>System32</Crumb>
        <Grow />
        <NavButton $w={22} aria-label="以前的位置"><Stroke w={14} h={10} d="M1 2L7 8L13 2" color="#757575" width={3} sharp={false} /></NavButton>
        <RefreshButton $w={26} aria-label="刷新"><RefreshGlyph /></RefreshButton>
      </AddressBox>
      <FolderSearch>
        <FolderSearchInput aria-label="在 System32 中搜索" placeholder="在 System32 中搜索" />
        <SearchGlyph />
      </FolderSearch>
    </AddressRow>

    <Panes>
      <NavPane>
        {navEntries.map((n, i) => (
          <NavItem key={i} href="#" $level={n.level} $active={n.active} $gap={n.gap}>
            <IconSlot $w={22}>{n.icon}</IconSlot>
            <span>{n.label}</span>
            {n.pin && <PinSlot><PinIcon /></PinSlot>}
          </NavItem>
        ))}
      </NavPane>
      <Scrollbar before={0} thumb={708} after={22} />
      <PaneSplit />
      <FilePane>
        <FileTable>
          <colgroup>
            <col style={{ width: 21 }} />
            <col style={{ width: 437 }} />
            <col style={{ width: 244 }} />
            <col style={{ width: 203 }} />
            <col style={{ width: 129 }} />
            <col style={{ width: 6 }} />
          </colgroup>
          <thead>
            <tr>
              <HeadCell colSpan={2}>
                <HeadLabel $pad={26} $sorted>
                  名称
                  <SortMark $left={232} $top={1}><Stroke w={12} h={6} d="M.5 5.500L6 .5L11.500 5.500" color="#555" sharp={false} /></SortMark>
                  <FilterButton aria-label="筛选"><Stroke w={10} h={7} d="M.5 1L5 5.500L9.500 1" color="#444" sharp={false} /></FilterButton>
                </HeadLabel>
              </HeadCell>
              <HeadCell><HeadLabel $pad={10}>修改日期</HeadLabel></HeadCell>
              <HeadCell><HeadLabel $pad={9}>类型</HeadLabel></HeadCell>
              <HeadCell colSpan={2}><HeadLabel $pad={9}>大小</HeadLabel></HeadCell>
            </tr>
          </thead>
          <tbody>
            {files.map(([name, date, type, size]) => (
              <FileRow key={name} $selected={name === 'notepad'}>
                <td />
                <td><NameCell><IconSlot $w={24}>{fileIcon(name, type)}</IconSlot>{name}</NameCell></td>
                <TextCell $pad={10} $size={19}>{date}</TextCell>
                <TextCell $pad={9}>{type}</TextCell>
                <SizeCell>{size}</SizeCell>
                <td />
              </FileRow>
            ))}
          </tbody>
        </FileTable>
      </FilePane>
      <Scrollbar before={404} thumb={26} after={300} />
    </Panes>

    <ExplorerStatus>
      <span>4,557 个项目</span>
      <StatusDivider />
      <span>选中 1 个项目</span>
      <StatusSize>196 KB</StatusSize>
      <StatusDivider />
      <Grow />
      <ViewButton $on aria-label="详细信息">
        <svg width="22" height="22" viewBox="0 0 22 22">
          <path d="M.5 .5h5v20h-5zM.5 5.500h5M.5 10.500h5M.5 15.500h5" fill="#fff" stroke="#8a8f93" />
          <path d="M3 2v2M3 7v2M3 12v2M3 17v2" stroke="#333" strokeWidth="1.500" />
          <path d="M7 3h6M15 3h6M7 8h6M15 8h6M7 13h6M15 13h6M7 18h6M15 18h6" stroke="#5c6b73" />
        </svg>
      </ViewButton>
      <ViewButton aria-label="大图标"><PictureIcon /></ViewButton>
      <IconSlot $w={8} />
    </ExplorerStatus>
  </ExplorerFrame>
);

/* ---------------------------------------------------------- floating gauge */

const Gauge = styled.div`
  position: absolute;
  right: -6px;
  top: 938px;
  width: 19px;
  height: 90px;
  padding: 2px;
  border: 2px solid #5c5f63;
  border-radius: 8px;
  background: #fff;
`;

const GaugeFill = styled.div`
  height: 100%;
  border-radius: 4px;
  background: linear-gradient(#fff 50%, #6db0f8 52%, #3f8ff0);
`;

/* ----------------------------------------------------------------- taskbar */

const Taskbar = styled.nav`
  display: flex;
  height: 60px;
  flex: none;
  background: linear-gradient(90deg, #d5e0ea 0%, #d9dee7 22%, #d7dbe4 50%, #d9d9e0 60%, #e2d8d8 66%, #e0dadb 78%, #e4d5d9 92%, #e0d9dc 100%);
`;

const StartButton = styled.button`
  display: flex;
  align-items: center;
  justify-content: center;
  width: 72px;
`;

const TaskSearch = styled.label`
  display: flex;
  align-items: center;
  width: 432px;
  padding-left: 16px;
  gap: 14px;
  border: 2px solid #cacaca;
  background: #fff;
  font-size: 24px;
`;

const TaskSearchInput = styled.input`
  flex: 1;
  min-width: 0;
  line-height: 36px;
  &::placeholder { color: #2b2b2b; opacity: 1; }
`;

const StoreButton = styled.button`
  display: flex;
  align-items: center;
  justify-content: center;
  width: 79px;
`;

const TaskButton = styled.button<{ $active?: boolean }>`
  position: relative;
  display: flex;
  align-items: center;
  gap: 4px;
  width: 276px;
  margin-right: 2px;
  padding-left: 15px;
  white-space: nowrap;
  background: ${(p) => (p.$active ? '#eff1f5' : 'transparent')};
  &::after {
    content: '';
    position: absolute;
    left: ${(p) => (p.$active ? 0 : 6)}px;
    right: ${(p) => (p.$active ? 0 : 6)}px;
    bottom: 0;
    height: 3px;
    background: #0078d7;
  }
`;

const TrayButton = styled.button<{ $w: number; $size?: number }>`
  position: relative;
  display: flex;
  align-items: center;
  justify-content: center;
  width: ${(p) => p.$w}px;
  font-size: ${(p) => p.$size ?? 18}px;
`;

const Clock = styled.button`
  display: flex;
  flex-direction: column;
  justify-content: center;
  align-items: center;
  gap: 4px;
  width: 112px;
  font-size: 19px;
`;

const NoticeBadge = styled.span`
  position: absolute;
  right: 18px;
  bottom: 7px;
  width: 24px;
  height: 24px;
  border: 1px solid #555;
  border-radius: 50%;
  background: #d3cfd1;
  font-size: 18px;
  font-weight: 700;
  line-height: 22px;
  text-align: center;
`;

const ShowDesktop = styled.button`
  width: 8px;
  border-left: 1px solid #a39ca0;
`;

const tasks = [
  { label: 'WeTab 新标签页 和另...', icon: <EdgeIcon /> },
  { label: '网络攻防实验三', icon: <EdgeIcon /> },
  { label: 'System32', icon: <FolderIcon size={32} />, active: true },
  { label: '任务管理器', icon: <TaskManagerIcon /> },
  { label: 'C:\\Windows\\system32...', icon: <ConsoleIcon /> },
  { label: 'notepad.exe - Everythi...', icon: <MagnifierLogo size={36} /> },
];

const SystemTaskbar = () => (
  <Taskbar>
    <StartButton aria-label="开始"><WindowsLogo /></StartButton>
    <TaskSearch>
      <svg width="26" height="26" viewBox="0 0 26 26">
        <circle cx="16.500" cy="9.500" r="8" fill="none" stroke="#111" strokeWidth="1.700" />
        <path d="M11 15.500L1 25.500" stroke="#111" strokeWidth="1.700" />
      </svg>
      <TaskSearchInput aria-label="搜索" placeholder="搜索" />
    </TaskSearch>
    <StoreButton aria-label="Microsoft Store"><StoreIcon /></StoreButton>
    {tasks.map((t) => (
      <TaskButton key={t.label} $active={t.active}>
        <IconSlot $w={36}>{t.icon}</IconSlot>
        {t.label}
      </TaskButton>
    ))}
    <Grow />
    <TrayButton $w={36} aria-label="显示隐藏的图标"><Stroke w={18} h={10} d="M1 9L9 1L17 9" color="#111" width={2} sharp={false} /></TrayButton>
    <TrayButton $w={36} aria-label="网络"><MonitorTray /></TrayButton>
    <TrayButton $w={36} aria-label="音量"><SpeakerTray /></TrayButton>
    <TrayButton $w={36} aria-label="更新"><UpdateTray /></TrayButton>
    <TrayButton $w={34} $size={24}>英</TrayButton>
    <Clock><span>17:23</span><span>2025/10/20</span></Clock>
    <TrayButton $w={74} aria-label="通知">
      <svg width="36" height="32" viewBox="0 0 36 32">
        <path d="M0 4H24V24H14L10 30V24H0Z" fill="#000" />
        <path d="M5 10H19M5 14.500H19M5 19H14" stroke="#e3d8da" strokeWidth="1.600" />
      </svg>
      <NoticeBadge>2</NoticeBadge>
    </TrayButton>
    <ShowDesktop aria-label="显示桌面" />
  </Taskbar>
);

export default function App() {
  return (
    <>
      <GlobalStyle />
      <Desktop>
        <Everything />
        <SystemTaskbar />
        <Explorer />
        <Gauge><GaugeFill /></Gauge>
      </Desktop>
    </>
  );
}
